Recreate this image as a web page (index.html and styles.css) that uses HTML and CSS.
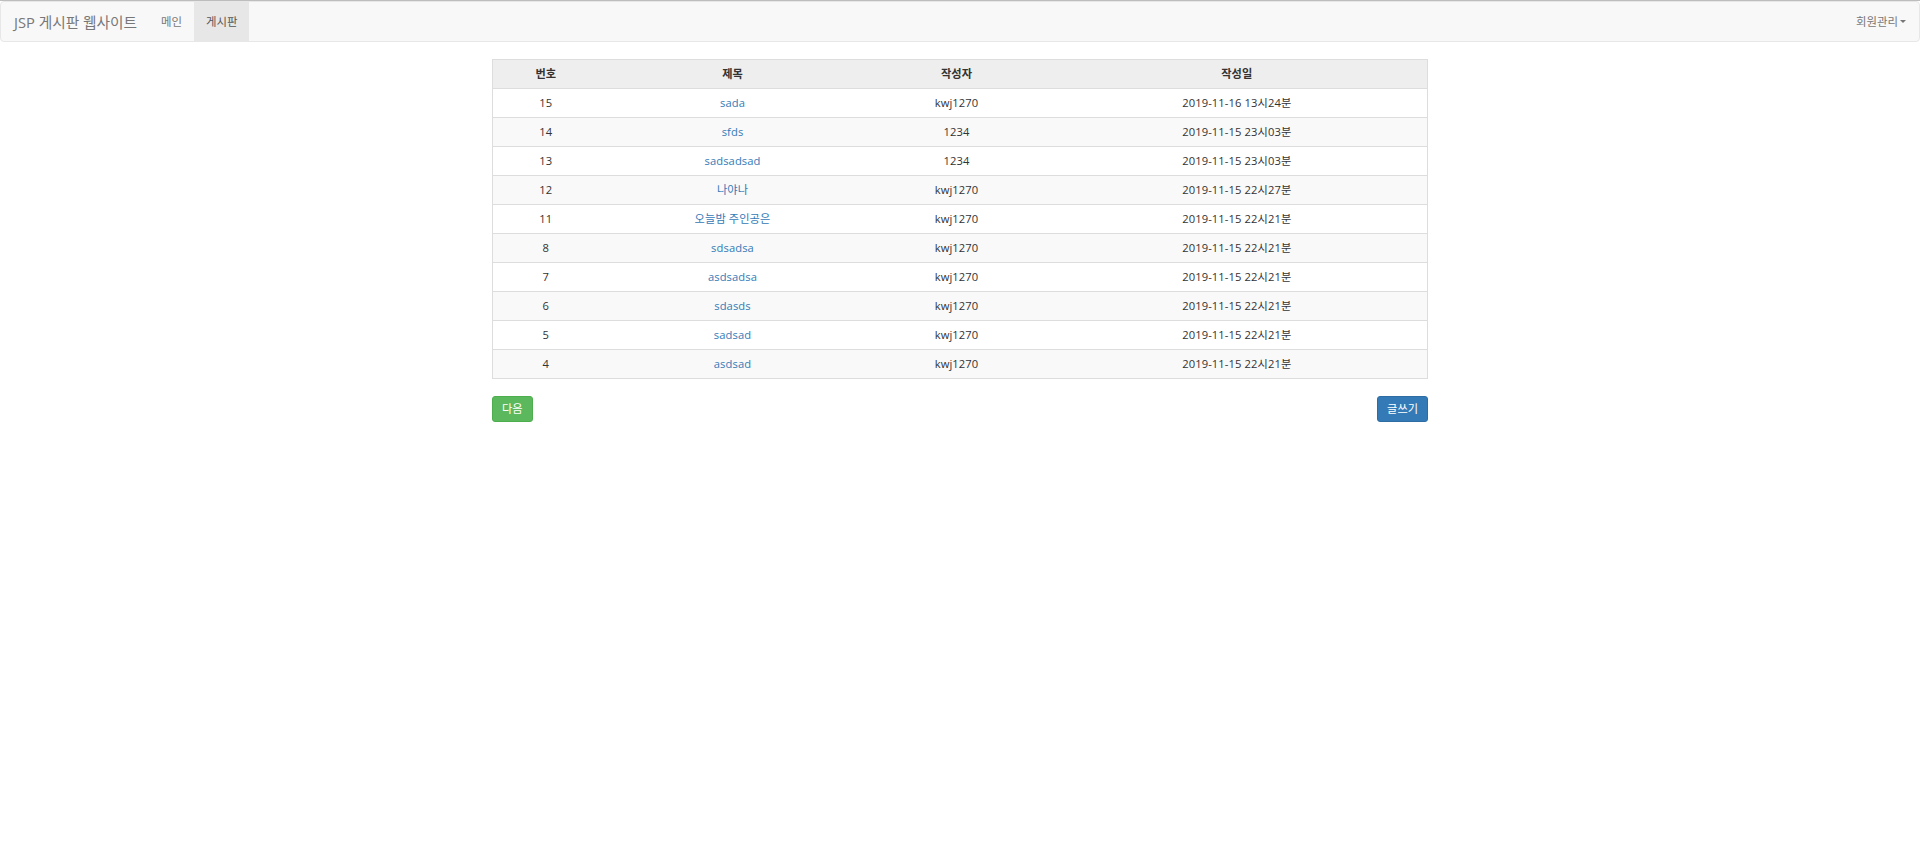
FILE: index.html
```html
<!DOCTYPE html>
<html lang="ko">
<head>
<meta charset="utf-8">
<title>JSP 게시판 웹사이트</title>
<link rel="stylesheet" href="styles.css">
</head>
<body>
<nav class="navbar">
  <div class="nav-left">
    <a class="brand" href="#">JSP 게시판 웹사이트</a>
    <a class="nav-link" href="#">메인</a>
    <a class="nav-link active" href="#">게시판</a>
  </div>
  <div class="nav-right">
    <a class="nav-link dropdown" href="#">회원관리<span class="caret"></span></a>
  </div>
</nav>
<main class="container">
  <table class="board">
    <colgroup>
      <col class="c-num"><col class="c-title"><col class="c-writer"><col>
    </colgroup>
    <thead>
      <tr><th>번호</th><th>제목</th><th>작성자</th><th>작성일</th></tr>
    </thead>
    <tbody>
      <tr><td>15</td><td><a href="#">sada</a></td><td>kwj1270</td><td>2019-11-16 13시24분</td></tr>
      <tr><td>14</td><td><a href="#">sfds</a></td><td>1234</td><td>2019-11-15 23시03분</td></tr>
      <tr><td>13</td><td><a href="#">sadsadsad</a></td><td>1234</td><td>2019-11-15 23시03분</td></tr>
      <tr><td>12</td><td><a href="#">나야나</a></td><td>kwj1270</td><td>2019-11-15 22시27분</td></tr>
      <tr><td>11</td><td><a href="#">오늘밤 주인공은</a></td><td>kwj1270</td><td>2019-11-15 22시21분</td></tr>
      <tr><td>8</td><td><a href="#">sdsadsa</a></td><td>kwj1270</td><td>2019-11-15 22시21분</td></tr>
      <tr><td>7</td><td><a href="#">asdsadsa</a></td><td>kwj1270</td><td>2019-11-15 22시21분</td></tr>
      <tr><td>6</td><td><a href="#">sdasds</a></td><td>kwj1270</td><td>2019-11-15 22시21분</td></tr>
      <tr><td>5</td><td><a href="#">sadsad</a></td><td>kwj1270</td><td>2019-11-15 22시21분</td></tr>
      <tr><td>4</td><td><a href="#">asdsad</a></td><td>kwj1270</td><td>2019-11-15 22시21분</td></tr>
    </tbody>
  </table>
  <div class="actions">
    <a class="btn btn-success" href="#">다음</a>
    <a class="btn btn-primary" href="#">글쓰기</a>
  </div>
</main>
</body>
</html>
```

FILE: styles.css
```css
* { box-sizing: border-box; }

html, body { margin: 0; padding: 0; }

body {
  font-family: "Open Sans", "Noto Sans CJK KR", sans-serif;
  font-size: 11.2px;
  line-height: 16px;
  color: #333;
  background: #fff;
  border-top: 1px solid #bdbdbd;
}

a { text-decoration: none; }

.navbar {
  display: flex;
  justify-content: space-between;
  align-items: stretch;
  height: 41px;
  background: #f8f8f8;
  border: 1px solid #e7e7e7;
  border-radius: 4px;
}

.nav-left, .nav-right {
  display: flex;
  align-items: stretch;
}

.brand {
  display: flex;
  align-items: center;
  padding: 0 12px 0 13px;
  font-size: 14.7px;
  color: #777;
}

.nav-link {
  display: flex;
  align-items: center;
  padding: 0 12px;
  color: #777;
  font-size: 11.4px;
}

.nav-link.active {
  background: #e7e7e7;
  color: #555;
}

.nav-right { padding-right: 1px; }

.dropdown { padding-right: 12px; }

.caret {
  display: inline-block;
  width: 0;
  height: 0;
  margin-left: 2px;
  border-top: 3px solid #777;
  border-left: 3px solid transparent;
  border-right: 3px solid transparent;
}

.container {
  width: 936px;
  margin: 17px auto 0;
}

.board {
  width: 100%;
  border-collapse: collapse;
  border: 1px solid #ddd;
  margin-bottom: 17px;
}

.c-num { width: 106px; }
.c-title { width: 268px; }
.c-writer { width: 180px; }

.board th, .board td {
  text-align: center;
  padding: 6px 6px;
  height: 29px;
  line-height: 16px;
  border-top: 1px solid #ddd;
}

.board td { letter-spacing: 0.1px; }

.board th {
  background: #eee;
  font-weight: bold;
  color: #333;
}

.board tbody tr:nth-child(even) { background: #f9f9f9; }

.board td a { color: #337ab7; }

.actions {
  display: flex;
  justify-content: space-between;
}

.btn {
  display: inline-block;
  height: 26px;
  line-height: 24px;
  padding: 0 9px;
  font-size: 11.2px;
  color: #fff;
  border: 1px solid transparent;
  border-radius: 3px;
}

.btn-success { background: #5cb85c; border-color: #4cae4c; }
.btn-primary { background: #337ab7; border-color: #2e6da4; }
```
